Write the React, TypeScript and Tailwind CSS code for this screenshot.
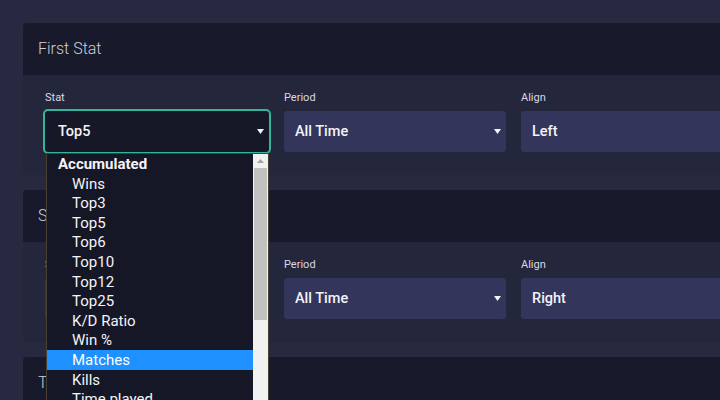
import React from 'react';

const statOptions = [
  'Wins',
  'Top3',
  'Top5',
  'Top6',
  'Top10',
  'Top12',
  'Top25',
  'K/D Ratio',
  'Win %',
  'Matches',
  'Kills',
  'Time played',
];

function Arrow() {
  return (
    <svg width="7" height="5" viewBox="0 0 7 5" className="shrink-0">
      <path d="M0 0h7L3.5 5z" fill="#f2f2f7" />
    </svg>
  );
}

function FakeSelect({
  value,
  focused,
  arrow = true,
}: {
  value: string;
  focused?: boolean;
  arrow?: boolean;
}) {
  return (
    <div
      className={
        focused
          ? 'flex h-[41px] items-center justify-between rounded-[3px] bg-[#171827] pl-[13px] pr-[5px] outline-2 outline-offset-0 outline-[#35b597]'
          : 'flex h-[41px] items-center justify-between rounded-[3px] bg-[#33355a] pl-[11px] pr-[5px]'
      }
    >
      <span className="text-[14.5px] font-medium text-[#f3f3f8]">{value}</span>
      {arrow && <Arrow />}
    </div>
  );
}

function StatCard({
  title,
  stat,
  period,
  align,
}: {
  title: string;
  stat: string;
  period: string;
  align: string;
}) {
  return (
    <div className="overflow-hidden rounded-[4px]">
      <div className="flex h-[52px] items-center bg-[#181a2b] px-[15px] text-[16px] font-light text-[#cfd0da]">
        {title}
      </div>
      <div className="h-[100px] bg-[#24263c] px-[22px] pt-[16px]">
        <div className="grid grid-cols-[224px_222px_240px] gap-x-[15px]">
          <div>
            <div className="mb-[7px] h-[13px] text-[11px] leading-[13px] text-[#d9d9e3]">Stat</div>
            <FakeSelect value={stat} focused={title === 'First Stat'} />
          </div>
          <div>
            <div className="mb-[7px] h-[13px] text-[11px] leading-[13px] text-[#d9d9e3]">Period</div>
            <FakeSelect value={period} />
          </div>
          <div>
            <div className="mb-[7px] h-[13px] text-[11px] leading-[13px] text-[#d9d9e3]">Align</div>
            <FakeSelect value={align} arrow={false} />
          </div>
        </div>
      </div>
    </div>
  );
}

export default function App() {
  return (
    <div className="relative h-[400px] w-[720px] overflow-hidden bg-[#272940] font-['Roboto',sans-serif]">
      <div className="flex w-[780px] flex-col gap-[15px] pl-[23px] pt-[23px]">
        <StatCard title="First Stat" stat="Top5" period="All Time" align="Left" />
        <StatCard title="Second Stat" stat="Wins" period="All Time" align="Right" />
        <StatCard title="Third Stat" stat="Kills" period="All Time" align="Left" />
      </div>

      {/* open select list, drawn over the cards */}
      <div className="absolute left-[46px] top-[153px] flex h-[270px] w-[223px] border border-[#4a3f33] bg-[#161726]">
        <div className="flex-1">
          <div className="h-[19.6px] pl-[11px] text-[15px] font-bold leading-[20px] text-[#f3f3f8]">
            Accumulated
          </div>
          {statOptions.map((opt) => (
            <div
              key={opt}
              className={
                opt === 'Matches'
                  ? 'h-[19.6px] bg-[#1e90ff] pl-[25px] text-[15px] leading-[20px] text-white'
                  : 'h-[19.6px] pl-[25px] text-[15px] leading-[20px] text-[#f3f3f8]'
              }
            >
              {opt}
            </div>
          ))}
        </div>
        <div className="flex w-[15px] flex-col bg-[#f1f1f1]">
          <div className="flex h-[14px] items-center justify-center">
            <svg width="7" height="4" viewBox="0 0 7 4">
              <path d="M0 4h7L3.5 0z" fill="#a3a3a3" />
            </svg>
          </div>
          <div className="mx-[1px] h-[152px] bg-[#c1c1c1]" />
        </div>
      </div>
    </div>
  );
}
